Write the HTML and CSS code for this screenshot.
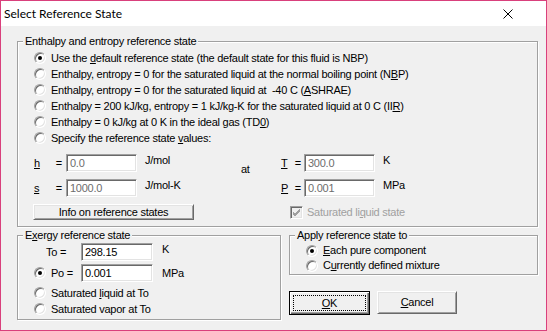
FILE: index.html
```html
<!DOCTYPE html>
<html lang="en">
<head>
    <meta charset="UTF-8">
    <title>Select Reference State</title>
    <link rel="stylesheet" href="styles.css">
</head>
<body>
<div class="window">
    <div class="titlebar">
        <span class="title">Select Reference State</span>
        <svg class="close" width="10" height="10" viewBox="0 0 10 10">
            <path d="M0.5 0.5L9.5 9.5M9.5 0.5L0.5 9.5" stroke="#000" stroke-width="1" fill="none"/>
        </svg>
    </div>
    <div class="dialog">
        <div class="group group-ref">
            <span class="group-title">Enthalpy and entropy reference state</span>
            <div class="radio-row"><span class="radio checked"></span><span>Use the <u>d</u>efault reference state (the default state for this fluid is NBP)</span></div>
            <div class="radio-row"><span class="radio"></span><span>Enthalpy, entropy = 0 for the saturated liquid at the normal boiling point (N<u>B</u>P)</span></div>
            <div class="radio-row"><span class="radio"></span><span>Enthalpy, entropy = 0 for the saturated liquid at&nbsp; -40 C (<u>A</u>SHRAE)</span></div>
            <div class="radio-row"><span class="radio"></span><span>Enthalpy = 200 kJ/kg, entropy = 1 kJ/kg-K for the saturated liquid at 0 C (II<u>R</u>)</span></div>
            <div class="radio-row"><span class="radio"></span><span>Enthalpy = 0 kJ/kg at 0 K in the ideal gas (TD<u>0</u>)</span></div>
            <div class="radio-row"><span class="radio"></span><span>Specify the reference state <u>v</u>alues:</span></div>

            <div class="values">
                <div class="field field-h">
                    <span class="field-label"><u>h</u><span>=</span></span>
                    <span class="textbox disabled">0.0</span>
                    <span class="unit">J/mol</span>
                </div>
                <div class="at">at</div>
                <div class="field field-t">
                    <span class="field-label short"><u>T</u><span>=</span></span>
                    <span class="textbox disabled">300.0</span>
                    <span class="unit">K</span>
                </div>
                <div class="field field-s">
                    <span class="field-label"><u>s</u><span>=</span></span>
                    <span class="textbox disabled">1000.0</span>
                    <span class="unit">J/mol-K</span>
                </div>
                <div class="field field-p">
                    <span class="field-label short"><u>P</u><span>=</span></span>
                    <span class="textbox disabled">0.001</span>
                    <span class="unit">MPa</span>
                </div>
                <button class="btn btn-info">Info on reference states</button>
                <div class="check-row">
                    <span class="checkbox">
                        <svg width="9" height="9" viewBox="0 0 9 9"><path d="M1 3l2 2 5-5M1 4l2 2 5-5M1 5l2 2 5-5" stroke="#a0a0a0" fill="none" transform="translate(0 1)"/></svg>
                    </span>
                    <span>Saturated li<u>q</u>uid state</span>
                </div>
            </div>
        </div>

        <div class="bottom">
            <div class="group group-exergy">
                <span class="group-title">E<u>x</u>ergy reference state</span>
                <div class="ex-row ex-to">
                    <span class="ex-label">To =</span>
                    <span class="textbox wide">298.15</span>
                    <span class="unit">K</span>
                </div>
                <div class="ex-row">
                    <span class="radio checked"></span>
                    <span class="ex-label narrow">Po =</span>
                    <span class="textbox wide">0.001</span>
                    <span class="unit unit-low">MPa</span>
                </div>
                <div class="radio-row"><span class="radio"></span><span>Saturated <u>l</u>iquid at To</span></div>
                <div class="radio-row"><span class="radio"></span><span>Saturated vapor at To</span></div>
            </div>

            <div class="side">
                <div class="group group-apply">
                    <span class="group-title">Apply reference state to</span>
                    <div class="radio-row"><span class="radio checked"></span><span><u>E</u>ach pure component</span></div>
                    <div class="radio-row"><span class="radio"></span><span>C<u>u</u>rrently defined mixture</span></div>
                </div>
                <div class="buttons">
                    <button class="btn btn-default"><u>O</u>K</button>
                    <button class="btn btn-cancel"><u>C</u>ancel</button>
                </div>
            </div>
        </div>
    </div>
</div>
</body>
</html>
```
FILE: styles.css
```css
body {
    margin: 0;
    background-color: #fff;
    font-family: "Liberation Sans", Arial, sans-serif;
    font-size: 11px;
    line-height: 13px;
    letter-spacing: -0.25px;
    color: #000;
}
.window {
    width: 547px;
    height: 331px;
    box-sizing: border-box;
    border: 1px solid #d9407c;
    display: flex;
    flex-direction: column;
    background-color: #f0f0f0;
}
.titlebar {
    height: 25px;
    flex: none;
    background-color: #fff;
    display: flex;
    align-items: center;
    justify-content: space-between;
    padding: 0 33px 0 3px;
}
.title {
    font-family: Lato, "Noto Sans", sans-serif;
    font-size: 12px;
    letter-spacing: 0;
    color: #000;
}
.close {
    display: block;
}
.dialog {
    flex: 1;
    padding: 15px 8px 0 16px;
}
u {
    text-decoration: underline;
    text-underline-offset: 1px;
}

/* group boxes */
.group {
    position: relative;
    border: 1px solid #a0a0a0;
    box-shadow: inset 1px 1px 0 #fff, 1px 1px 0 #fff;
}
.group-title {
    position: absolute;
    top: -7px;
    left: 5px;
    padding: 0 2px;
    background-color: #f0f0f0;
    white-space: nowrap;
}
.group-ref {
    padding: 8px 8px 6px 16px;
}

/* radios */
.radio-row {
    display: flex;
    align-items: center;
    gap: 5px;
    height: 16px;
    white-space: nowrap;
}
.radio {
    position: relative;
    flex: none;
    width: 12px;
    height: 12px;
    box-sizing: border-box;
    border-radius: 50%;
    background-color: #fff;
    border: 1px solid;
    border-color: #a0a0a0 #fff #fff #a0a0a0;
    box-shadow: inset 1px 1px 0 #696969, inset -1px -1px 0 #e3e3e3;
}
.radio.checked::after {
    content: "";
    position: absolute;
    left: 3px;
    top: 3px;
    width: 4px;
    height: 4px;
    border-radius: 50%;
    background-color: #000;
}

/* reference values */
.values {
    margin-top: 8px;
    display: grid;
    grid-template-columns: 207px 40px 1fr;
    grid-template-rows: 18px 18px 16px;
    row-gap: 7px;
    grid-template-areas:
        "h at t"
        "s at p"
        "info . check";
}
.field-h { grid-area: h; }
.field-s { grid-area: s; }
.field-t { grid-area: t; }
.field-p { grid-area: p; }
.at {
    grid-area: at;
    padding-top: 9px;
}
.field {
    display: flex;
    align-items: center;
}
.field-label {
    width: 32px;
    flex: none;
    box-sizing: border-box;
    padding-right: 4px;
    display: flex;
    justify-content: space-between;
}
.field-label.short {
    width: 23px;
    padding-right: 3px;
}
.textbox {
    display: block;
    width: 71px;
    height: 18px;
    box-sizing: border-box;
    padding: 2px 0 0 3px;
    background-color: #fff;
    border: 1px solid;
    border-color: #a0a0a0 #fff #fff #a0a0a0;
    box-shadow: inset 1px 1px 0 #696969, inset -1px -1px 0 #e3e3e3;
}
.textbox.disabled {
    color: #6d6d6d;
}
.textbox.wide {
    width: 72px;
}
.unit {
    align-self: flex-start;
    margin-left: 8px;
}
.check-row {
    grid-area: check;
    display: flex;
    align-items: center;
    gap: 4px;
    margin-left: 9px;
    color: #a0a0a0;
}
.checkbox {
    width: 13px;
    height: 13px;
    box-sizing: border-box;
    border: 1px solid;
    border-color: #a0a0a0 #fff #fff #a0a0a0;
    box-shadow: inset 1px 1px 0 #696969, inset -1px -1px 0 #e3e3e3;
    background-color: #f0f0f0;
    display: flex;
    align-items: center;
    justify-content: center;
}
.checkbox svg {
    display: block;
}

/* buttons */
.btn {
    font-family: inherit;
    font-size: 11px;
    line-height: 13px;
    letter-spacing: inherit;
    color: #000;
    padding: 0;
    background-color: #f0f0f0;
    border: 1px solid;
    border-color: #fff #696969 #696969 #fff;
    box-shadow: inset 1px 1px 0 #e3e3e3, inset -1px -1px 0 #a0a0a0;
}
.btn-info {
    grid-area: info;
    width: 161px;
    height: 16px;
    margin-left: -1px;
}

/* bottom section */
.bottom {
    margin-top: 8px;
    display: flex;
    align-items: flex-start;
    gap: 8px;
}
.group-exergy {
    width: 264px;
    box-sizing: border-box;
    padding: 7px 0 2px 16px;
}
.ex-row {
    display: flex;
    align-items: center;
    height: 18px;
    margin-bottom: 3px;
}
.ex-to {
    padding-left: 12px;
}
.ex-row .radio {
    margin-right: 5px;
}
.ex-label {
    width: 35px;
    flex: none;
}
.ex-label.narrow {
    width: 30px;
}
.ex-row .unit {
    margin-left: 9px;
}
.ex-row .unit-low {
    margin-top: 3px;
}
.side {
    flex: 1;
}
.group-apply {
    padding: 7px 0 1px 16px;
}
.group-apply .radio-row {
    height: 15px;
}
.buttons {
    margin-top: 16px;
    display: flex;
    gap: 7px;
}
.btn-default {
    position: relative;
    width: 81px;
    height: 24px;
    border-color: #000;
    box-shadow: inset 1px 1px 0 #fff, inset -1px -1px 0 #696969, inset -2px -2px 0 #a0a0a0;
}
.btn-default::after {
    content: "";
    position: absolute;
    left: 3px;
    top: 3px;
    right: 3px;
    bottom: 3px;
    border: 1px dotted #000;
}
.btn-cancel {
    width: 80px;
    height: 23px;
}
```
